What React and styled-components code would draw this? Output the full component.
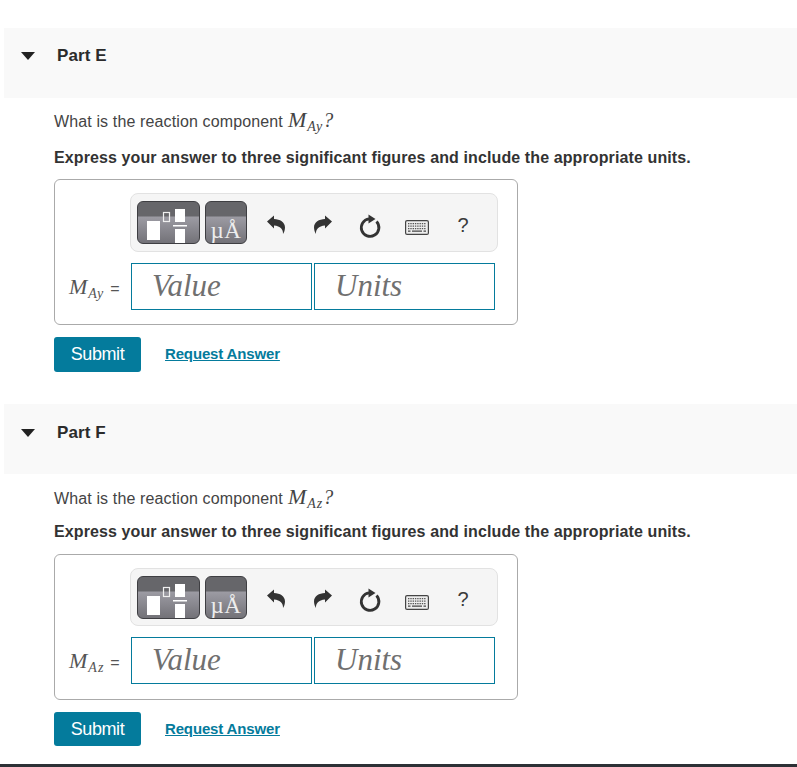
import React from "react";
import styled, { createGlobalStyle } from "styled-components";

const GlobalStyle = createGlobalStyle`
  html, body {
    margin: 0;
    padding: 0;
    background: #fff;
  }
  body {
    font-family: "Liberation Sans", Arial, sans-serif;
    color: #333;
  }
`;

const Page = styled.div`
  width: 797px;
  height: 767px;
  box-sizing: border-box;
  padding-top: 28px;
  overflow: hidden;
  display: flex;
  flex-direction: column;
`;

const Part = styled.section`
  padding-bottom: ${(p) => p.$bottom}px;
`;

const PartHeader = styled.div`
  height: 70px;
  margin-left: 4px;
  box-sizing: border-box;
  padding: ${(p) => p.$top}px 0 0 17px;
  background: #f9f9f9;
  display: flex;
  align-items: flex-start;
`;

const Caret = styled.span`
  width: 0;
  height: 0;
  margin-top: 6px;
  border-left: 7px solid transparent;
  border-right: 7px solid transparent;
  border-top: 8px solid #222;
`;

const PartTitle = styled.h2`
  margin: 0 0 0 22px;
  font-size: 17px;
  line-height: 20px;
  font-weight: 700;
  letter-spacing: 0.1px;
  color: #2b2b2b;
`;

const Body = styled.div`
  padding-left: 54px;
`;

const Question = styled.p`
  margin: ${(p) => p.$top}px 0 0;
  height: 24px;
  font-size: 16px;
  line-height: 24px;
  letter-spacing: 0.13px;
  color: #444;
  display: flex;
  align-items: baseline;
`;

const MathText = styled.span`
  font-family: "Liberation Serif", "Times New Roman", serif;
  font-style: italic;
  white-space: pre;
`;

const MathBig = styled(MathText)`
  font-size: 22px;
  letter-spacing: 0;
  margin-left: ${(p) => p.$gap}px;
`;

const MathSub = styled(MathText)`
  font-size: 14px;
  letter-spacing: 1px;
  margin-left: 1px;
  transform: translateY(4px);
`;

const MathEnd = styled(MathText)`
  font-size: 20px;
`;

const Equals = styled.span`
  font-size: 16px;
  margin-left: 6px;
`;

const Instructions = styled.p`
  margin: ${(p) => p.$top}px 0 0;
  font-size: 16px;
  line-height: 20px;
  font-weight: 700;
  letter-spacing: 0.11px;
  color: #333;
`;

const AnswerBox = styled.div`
  width: 464px;
  height: 146px;
  margin-top: ${(p) => p.$top}px;
  box-sizing: border-box;
  border: 1px solid #aaa;
  border-radius: 6px;
  padding-top: 13px;
`;

const Toolbar = styled.div`
  width: 368px;
  height: ${(p) => p.$height}px;
  margin-left: 75px;
  box-sizing: border-box;
  border: 1px solid #e2e2e2;
  border-radius: 8px;
  background: #f5f5f5;
  padding-left: 6px;
  display: flex;
  align-items: center;
`;

const PaletteButton = styled.div`
  width: ${(p) => p.$width}px;
  height: 43px;
  box-sizing: border-box;
  margin-right: ${(p) => p.$gap}px;
  border: 1px solid #3e3e42;
  border-radius: 6px;
  overflow: hidden;
  display: flex;
  justify-content: center;
  align-items: flex-end;
  background: linear-gradient(
    to bottom,
    #66666a 0,
    #66666a 14px,
    #9c9ba3 15px,
    #737278 100%
  );
`;

const UnitGlyph = styled.span`
  font-family: "Liberation Serif", "Times New Roman", serif;
  font-size: 23px;
  line-height: 24px;
  letter-spacing: 0.5px;
  color: #eeeeee;
`;

const ToolIcon = styled.span`
  width: ${(p) => p.$width}px;
  display: flex;
  justify-content: center;
  align-items: center;
  color: #333;
  transform: translateY(${(p) => p.$drop}px);
`;

const HelpMark = styled(ToolIcon)`
  font-size: 20px;
  line-height: 22px;
  color: #3a3a3a;
`;

const AnswerRow = styled.div`
  display: flex;
  align-items: center;
  margin-top: ${(p) => p.$top}px;
  padding-left: 14px;
`;

const Label = styled.div`
  width: 62px;
  display: flex;
  align-items: baseline;
  white-space: pre;
  color: #555;
`;

const Field = styled.div`
  width: 181px;
  height: 47px;
  margin-right: 2px;
  box-sizing: border-box;
  border: 1px solid #047b9c;
  padding-left: 20px;
  font-family: "Liberation Serif", "Times New Roman", serif;
  font-style: italic;
  font-size: 31px;
  line-height: 44px;
  color: #707070;
`;

const Actions = styled.div`
  display: flex;
  align-items: center;
  margin-top: ${(p) => p.$top}px;
`;

const SubmitButton = styled.button`
  width: 87px;
  height: ${(p) => p.$height}px;
  border: 0;
  border-radius: 3px;
  padding: 0;
  background: #047b9c;
  color: #fff;
  font: 400 18px "Liberation Sans", Arial, sans-serif;
  letter-spacing: -0.4px;
`;

const RequestLink = styled.a`
  margin: 0 0 2px 24px;
  font-size: 15px;
  font-weight: 700;
  letter-spacing: -0.15px;
  color: #047b9c;
  text-decoration: underline;
`;

const BottomRule = styled.div`
  margin-top: auto;
  height: 3px;
  background: #2d3136;
`;

const TemplateIcon = () => (
  <svg width="61" height="41" viewBox="0 0 61 41">
    <rect x="9" y="19" width="13" height="19" fill="#fff" />
    <rect x="25.5" y="10.5" width="6" height="9" fill="none" stroke="#f0f0f0" strokeWidth="1.2" />
    <rect x="37" y="7" width="10" height="13" fill="#fff" />
    <rect x="35" y="23" width="14" height="1.5" fill="#fff" />
    <rect x="37" y="27" width="10" height="14" fill="#fff" />
  </svg>
);

const UndoIcon = () => (
  <svg width="20" height="20" viewBox="0 0 20 20" fill="currentColor">
    <path d="M1 6.5 8 .5V4c6 .2 11 3 11 8.5 0 2.5-1 5-2 6.5.3-4.5-2.5-8-9-8.5v3z" />
  </svg>
);

const RedoIcon = () => (
  <svg width="20" height="20" viewBox="0 0 20 20" fill="currentColor">
    <path d="M19 6.5 12 .5V4C6 4.2 1 7 1 12.5c0 2.5 1 5 2 6.5-.3-4.5 2.5-8 9-8.5v3z" />
  </svg>
);

const ResetIcon = () => (
  <svg width="24" height="26" viewBox="0 0 24 26" fill="none">
    <path d="M18.5 8.5a8.8 8.8 0 1 1-7.5-2.7" stroke="currentColor" strokeWidth="2.8" />
    <path d="M10.5 1.5 17.5 6l-7 4.5z" fill="currentColor" />
  </svg>
);

const KeyboardIcon = () => (
  <svg width="24" height="15" viewBox="0 0 24 15">
    <rect x=".6" y=".6" width="22.8" height="13.8" rx="1.5" fill="#eee" stroke="#444" strokeWidth="1.2" />
    <path d="M3 3.7h18M3 6.2h18" stroke="#555" strokeWidth="1.2" strokeDasharray="1.4 .9" />
    <path d="M3 8.7h18" stroke="#555" strokeWidth="1.2" strokeDasharray="1.4 .9" />
    <path d="M3 11.2h2.5M7 11.2h10M18.5 11.2H21" stroke="#444" strokeWidth="1.2" />
  </svg>
);

const AnswerPart = ({ title, sub, layout }) => (
  <Part $bottom={layout.bottom}>
    <PartHeader $top={layout.header}>
      <Caret />
      <PartTitle>{title}</PartTitle>
    </PartHeader>
    <Body>
      <Question $top={layout.question}>
        What is the reaction component
        <MathBig $gap={5}>M</MathBig>
        <MathSub>{sub}</MathSub>
        <MathEnd>?</MathEnd>
      </Question>
      <Instructions $top={layout.instructions}>
        Express your answer to three significant figures and include the appropriate units.
      </Instructions>
      <AnswerBox $top={layout.box}>
        <Toolbar $height={layout.toolbar}>
          <PaletteButton $width={63} $gap={5}>
            <TemplateIcon />
          </PaletteButton>
          <PaletteButton $width={42} $gap={9}>
            <UnitGlyph>µÅ</UnitGlyph>
          </PaletteButton>
          <ToolIcon $width={40} $drop={2}><UndoIcon /></ToolIcon>
          <ToolIcon $width={54} $drop={2}><RedoIcon /></ToolIcon>
          <ToolIcon $width={40} $drop={3}><ResetIcon /></ToolIcon>
          <ToolIcon $width={53} $drop={5}><KeyboardIcon /></ToolIcon>
          <HelpMark $width={40} $drop={2}>?</HelpMark>
        </Toolbar>
        <AnswerRow $top={layout.row}>
          <Label>
            <MathBig $gap={0}>M</MathBig>
            <MathSub>{sub}</MathSub>
            <Equals>=</Equals>
          </Label>
          <Field>Value</Field>
          <Field>Units</Field>
        </AnswerRow>
      </AnswerBox>
      <Actions $top={layout.actions}>
        <SubmitButton $height={layout.submit}>Submit</SubmitButton>
        <RequestLink href="#">Request Answer</RequestLink>
      </Actions>
    </Body>
  </Part>
);

const partE = { header: 18, question: 10, instructions: 16, box: 11, toolbar: 59, row: 11, actions: 12, submit: 35, bottom: 32 };
const partF = { header: 19, question: 11, instructions: 13, box: 12, toolbar: 58, row: 11, actions: 12, submit: 34, bottom: 0 };

export default function App() {
  return (
    <Page>
      <GlobalStyle />
      <AnswerPart title="Part E" sub="Ay" layout={partE} />
      <AnswerPart title="Part F" sub="Az" layout={partF} />
      <BottomRule />
    </Page>
  );
}
